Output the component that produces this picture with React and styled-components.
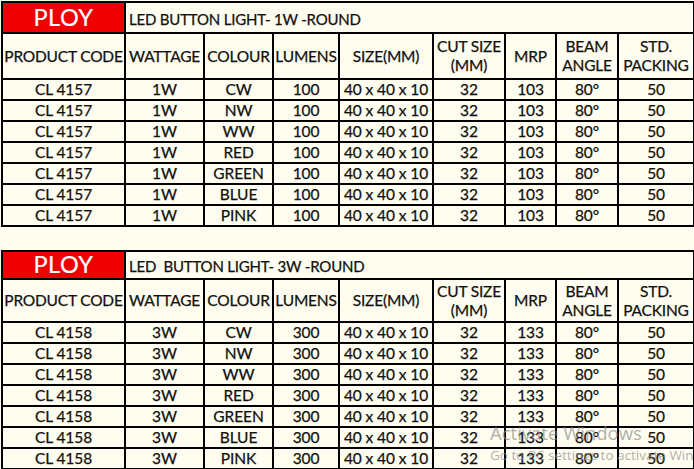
import React from "react";
import styled, { createGlobalStyle } from "styled-components";

const Global = createGlobalStyle`
  html, body { margin: 0; padding: 0; background: #fffdf0; }
  body { font-family: Lato, "Open Sans", sans-serif; color: #111; overflow: hidden; }
`;

const Page = styled.div`
  position: relative;
  width: 694px;
  height: 469px;
  overflow: hidden;
  display: flex;
  flex-direction: column;
  gap: 23px;
  padding-top: 1px;
  padding-left: 1px;
  box-sizing: border-box;
`;

const Table = styled.table`
  border-collapse: collapse;
  table-layout: fixed;
  width: 692px;
  background: #fffdf0;
  td, th { border: 2px solid #000; padding: 0; }
`;

const TitleRow = styled.tr`
  height: ${(p) => p.$h}px;
`;

const Brand = styled.td`
  background: #f00000;
  color: #fff;
  font-size: 23.5px;
  text-align: center;
  font-weight: 400;
  line-height: 1;
  letter-spacing: 0.5px;
  -webkit-text-stroke: 0.2px #fff;
`;

const Title = styled.td`
  font-size: 15px;
  text-align: left;
  padding-left: 3px !important;
  padding-top: 2px !important;
  white-space: pre;
  letter-spacing: -0.2px;
  -webkit-text-stroke: 0.25px #111;
`;

const HeadRow = styled.tr`
  height: ${(p) => p.$h}px;
`;

const Head = styled.th`
  font-weight: 400;
  font-size: 15.5px;
  line-height: 19px;
  text-align: center;
  white-space: nowrap;
  letter-spacing: -0.2px;
  -webkit-text-stroke: 0.25px #111;
`;

const DataRow = styled.tr`
  height: 21px;
`;

const Cell = styled.td`
  font-size: 15.5px;
  line-height: 17px;
  text-align: center;
  letter-spacing: -0.1px;
  -webkit-text-stroke: 0.25px #111;
`;

const Watermark = styled.div`
  position: absolute;
  left: 490px;
  top: 421px;
  color: rgba(140, 140, 140, 0.7);
  font-family: "Open Sans", sans-serif;
  white-space: nowrap;
  pointer-events: none;
`;

const WmBig = styled.div`
  font-size: 18.5px;
  line-height: 24px;
`;

const WmSmall = styled.div`
  font-size: 13.5px;
  line-height: 20px;
`;

const widths = [123, 79, 69, 66, 94, 72, 51, 62, 76];
const colours = ["CW", "NW", "WW", "RED", "GREEN", "BLUE", "PINK"];

function PriceTable({ title, code, watt, lumens, mrp, titleH, headH }) {
  return (
    <Table>
      <colgroup>
        {widths.map((w, i) => (
          <col key={i} style={{ width: w }} />
        ))}
      </colgroup>
      <tbody>
        <TitleRow $h={titleH}>
          <Brand>PLOY</Brand>
          <Title colSpan={8}>{title}</Title>
        </TitleRow>
        <HeadRow $h={headH}>
          <Head>PRODUCT CODE</Head>
          <Head>WATTAGE</Head>
          <Head>COLOUR</Head>
          <Head>LUMENS</Head>
          <Head>SIZE(MM)</Head>
          <Head>CUT SIZE<br />(MM)</Head>
          <Head>MRP</Head>
          <Head>BEAM<br />ANGLE</Head>
          <Head>STD.<br />PACKING</Head>
        </HeadRow>
        {colours.map((c) => (
          <DataRow key={c}>
            <Cell>{code}</Cell>
            <Cell>{watt}</Cell>
            <Cell>{c}</Cell>
            <Cell>{lumens}</Cell>
            <Cell>40 x 40 x 10</Cell>
            <Cell>32</Cell>
            <Cell>{mrp}</Cell>
            <Cell>80°</Cell>
            <Cell>50</Cell>
          </DataRow>
        ))}
      </tbody>
    </Table>
  );
}

export default function App() {
  return (
    <Page>
      <Global />
      <PriceTable
        title="LED BUTTON LIGHT- 1W -ROUND"
        code="CL 4157"
        watt="1W"
        lumens="100"
        mrp="103"
        titleH={31}
        headH={46}
      />
      <PriceTable
        title="LED  BUTTON LIGHT- 3W -ROUND"
        code="CL 4158"
        watt="3W"
        lumens="300"
        mrp="133"
        titleH={28}
        headH={43}
      />
      <Watermark>
        <WmBig>Activate Windows</WmBig>
        <WmSmall>Go to PC settings to activate Windows.</WmSmall>
      </Watermark>
    </Page>
  );
}
